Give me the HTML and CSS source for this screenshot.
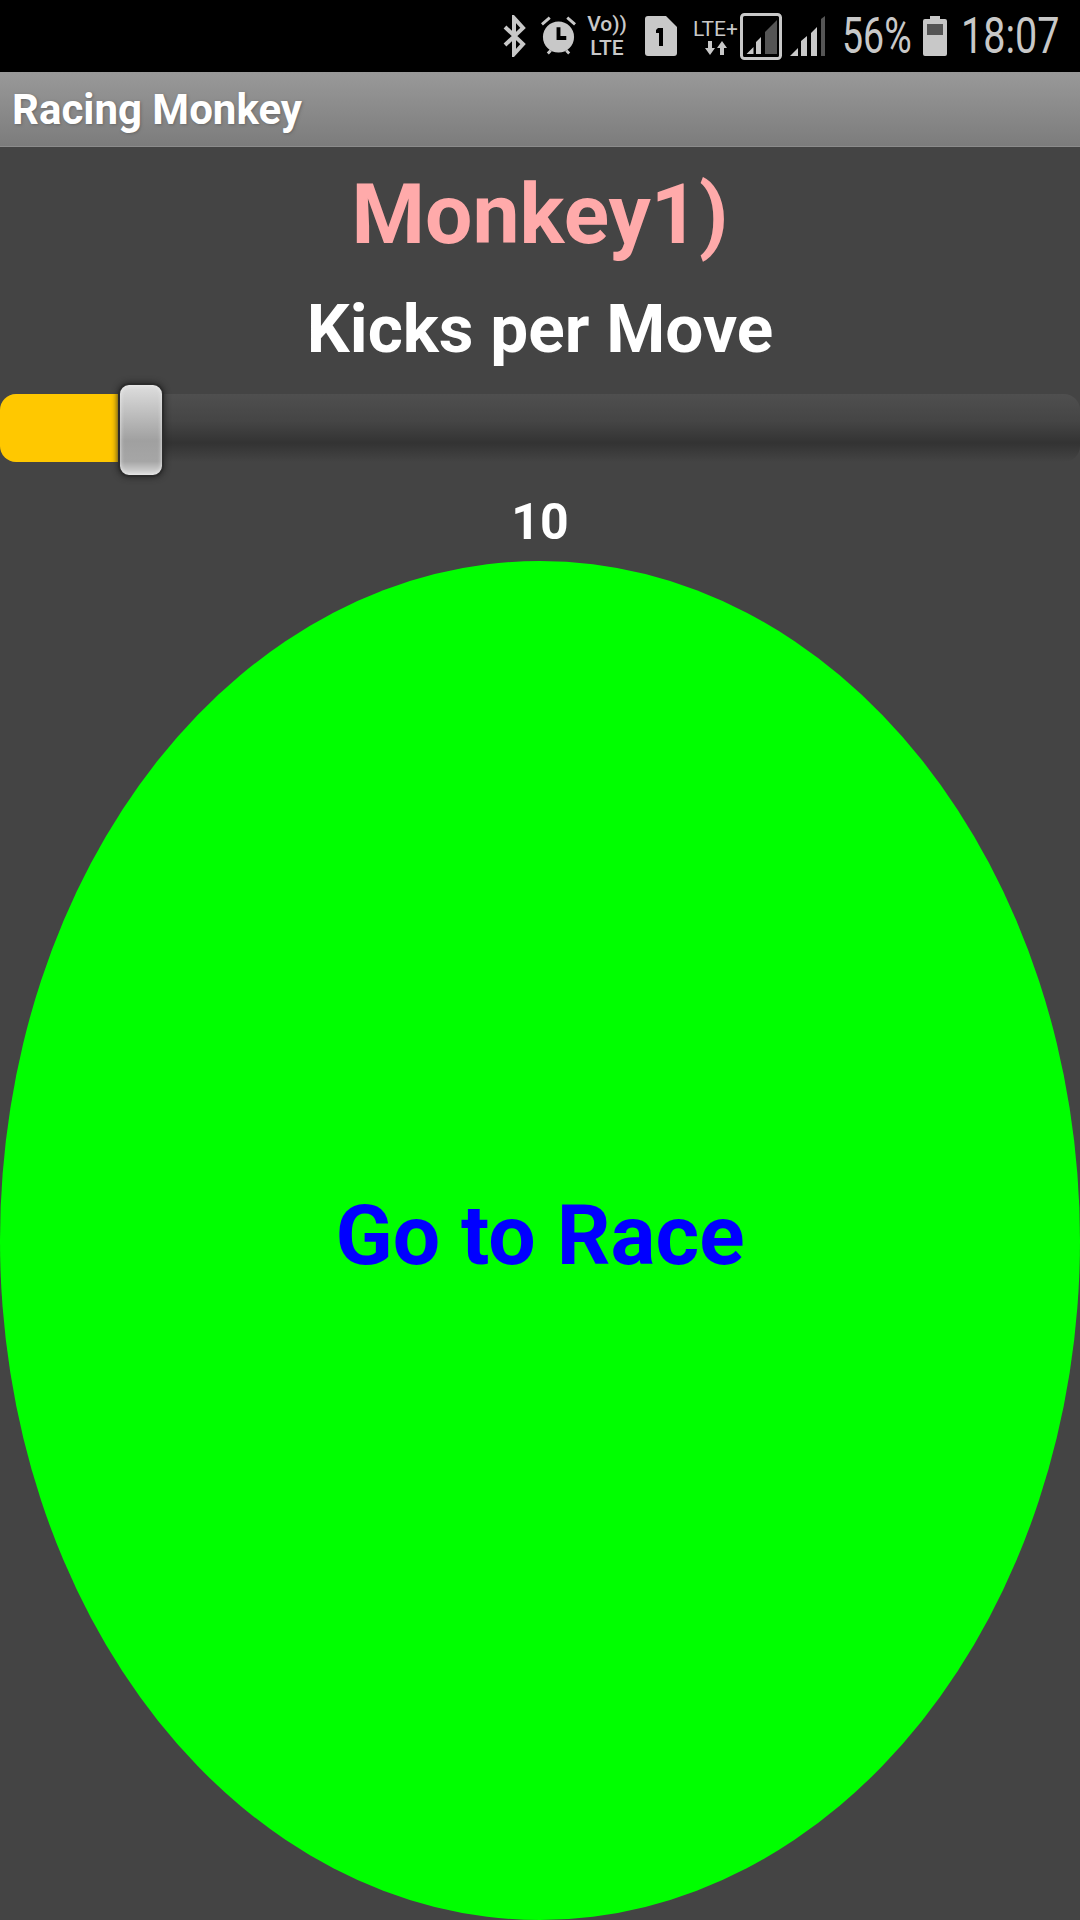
FILE: index.html
```html
<!DOCTYPE html>
<html lang="en">
<head>
<meta charset="utf-8">
<title>Racing Monkey</title>
<link rel="stylesheet" href="styles.css">
</head>
<body>
<div class="screen">
  <header class="status">
    <svg class="ic-bt" viewBox="0 0 23 42"><path d="M2 12 20 29 11 39V3l9 10L2 30" fill="none" stroke="#c8c8c8" stroke-width="4"/></svg>
    <svg class="ic-alarm" viewBox="0 0 36 42"><path d="M1 9 9 2M35 9 27 2M7 39l3-3M29 39l-3-3" stroke="#c8c8c8" stroke-width="3" fill="none"/><circle cx="18" cy="22" r="16" fill="#c8c8c8"/><path d="M18 12v11h8" stroke="#000" stroke-width="4" fill="none"/></svg>
    <div class="volte"><span>Vo))</span><span>LTE</span></div>
    <svg class="ic-sim" viewBox="0 0 32 40"><path d="M3 0h18l11 11v26a3 3 0 0 1-3 3H3a3 3 0 0 1-3-3V3a3 3 0 0 1 3-3z" fill="#c8c8c8"/><path d="M13 12h5v18h-4V17h-3v-3z" fill="#000"/></svg>
    <div class="lte"><span>LTE+</span><svg class="ic-arrows" viewBox="0 0 22 14"><path d="M3 0h4v7h3L5 14 0 7h3z" fill="#c8c8c8"/><path d="M15 14h4V7h3L17 0l-5 7h3z" fill="#c8c8c8"/></svg></div>
    <svg class="ic-box" viewBox="0 0 42 47"><rect x="1.5" y="1.5" width="39" height="44" rx="3" fill="none" stroke="#c8c8c8" stroke-width="3"/><path d="M6.5 41l7-7v7zM16 41V29l5-5v17z" fill="#c8c8c8"/><path d="M25 41V19L37 7v34z" fill="#555"/></svg>
    <svg class="ic-sig" viewBox="0 0 35 40"><path d="M0 40l8-8v8zM11 40V25l6-5v20zM21 40V17l6-6v29z" fill="#c8c8c8"/><path d="M31 40V3l4-3v40z" fill="#555"/></svg>
    <span class="pct"><span class="squeeze-pct">56%</span></span>
    <svg class="ic-bat" viewBox="0 0 24 40"><path d="M7 0h10v3h5a2 2 0 0 1 2 2v33a2 2 0 0 1-2 2H2a2 2 0 0 1-2-2V5a2 2 0 0 1 2-2h5z" fill="#c8c8c8"/><rect x="4" y="8" width="16" height="11" fill="#555"/></svg>
    <span class="clock"><span class="squeeze-clock">18:07</span></span>
  </header>
  <div class="titlebar"><span class="app-title">Racing Monkey</span></div>
  <main class="content">
    <h1 class="monkey">Monkey1)</h1>
    <h2 class="kicks">Kicks per Move</h2>
    <div class="slider">
      <div class="track">
        <div class="fill"></div>
      </div>
      <div class="thumb"></div>
    </div>
    <div class="value">10</div>
    <button class="go">Go to Race</button>
  </main>
</div>
</body>
</html>
```
FILE: styles.css
```css
* { box-sizing: border-box; }
html, body { margin: 0; padding: 0; }
body { width: 1080px; height: 1920px; overflow: hidden; background: #444; font-family: Roboto, sans-serif; }
.screen { width: 1080px; height: 1920px; display: flex; flex-direction: column; overflow: hidden; }

.status { height: 72px; flex: none; background: #000; color: #c8c8c8; display: flex; align-items: center; justify-content: flex-end; padding-right: 24px; }
.ic-bt { width: 23px; height: 42px; margin-right: 15px; }
.ic-alarm { width: 35px; height: 42px; margin-right: 13px; }
.volte { width: 36px; margin-right: 20px; display: flex; flex-direction: column; align-items: center; font-size: 21px; line-height: 24px; font-weight: 500; }
.ic-sim { width: 32px; height: 40px; margin-right: 16px; }
.lte { width: 45px; margin-right: 2px; display: flex; flex-direction: column; align-items: center; font-size: 21px; line-height: 24px; }
.ic-arrows { width: 22px; height: 14px; }
.ic-box { width: 42px; height: 47px; margin-right: 8px; }
.ic-sig { width: 35px; height: 40px; margin-right: 17px; }
.pct { width: 68px; margin-right: 13px; font-size: 50px; line-height: 60px; font-weight: 400; white-space: nowrap; }
.squeeze-pct { display: inline-block; transform: scaleX(0.75); transform-origin: left center; }
.ic-bat { width: 24px; height: 40px; margin-right: 14px; }
.clock { width: 95px; font-size: 50px; line-height: 60px; font-weight: 400; white-space: nowrap; }
.squeeze-clock { display: inline-block; transform: scaleX(0.79); transform-origin: left center; }

.titlebar { height: 75px; flex: none; display: flex; align-items: center; padding: 1px 0 0 12px; background: linear-gradient(#999, #7c7c7c); border-bottom: 1px solid #8c8c8c; }
.app-title { font-size: 42px; font-weight: 700; color: #fff; text-shadow: 1px 1px 3px #666; }

.content { flex: 1; display: flex; flex-direction: column; align-items: center; min-height: 0; }
.monkey { margin: 20px 0 0; font-size: 84px; line-height: 96px; font-weight: 700; color: #ffaaaa; }
.kicks { margin: 30px 0 0; font-size: 67.5px; line-height: 72px; font-weight: 700; color: #fff; }

.slider { width: 100%; height: 96px; margin-top: 15px; position: relative; display: flex; align-items: center; }
.track { width: 100%; height: 68px; border-radius: 16px; background: linear-gradient(#4f4f4f, #454545 40%, #333 72%, #444); overflow: hidden; }
.fill { width: 130px; height: 100%; background: #ffc800; }
.thumb { position: absolute; left: 118px; top: 3px; width: 46px; height: 94px; border-radius: 11px; border: 2px solid #2c2c2c; background: linear-gradient(#dedede, #a0a0a0 62%, #a6a6a6 85%, #dcdcdc); box-shadow: inset 0 0 4px #f0f0f0, 0 0 6px #222; }

.value { margin-top: 18px; font-size: 50px; line-height: 56px; font-weight: 700; color: #fff; }
.go { flex: none; width: 1080px; height: 1359px; margin-top: 11px; padding: 0 0 10px; border: 0; border-radius: 50%; background: #00ff00; color: #0000ff; font-family: Roboto, sans-serif; font-size: 84px; font-weight: 700; }
```
